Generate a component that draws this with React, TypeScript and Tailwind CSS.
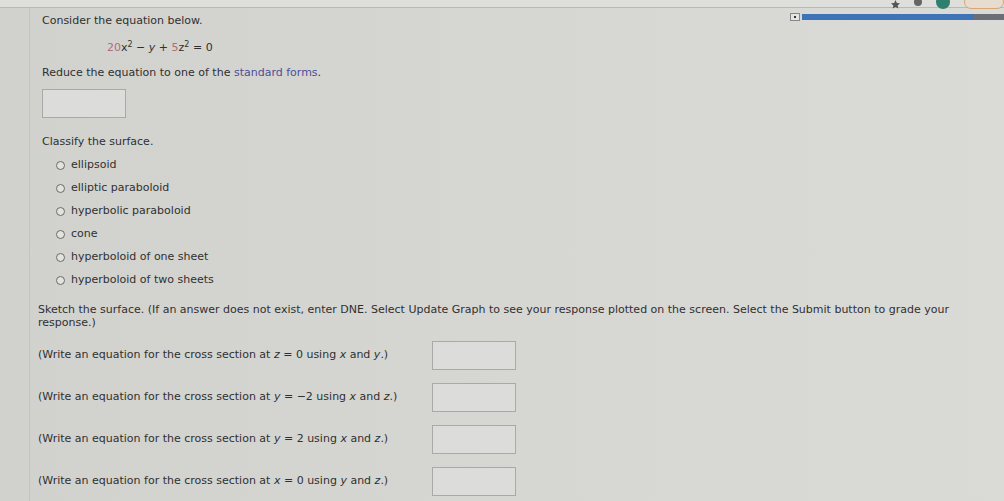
import React from "react"

const options = [
  "ellipsoid",
  "elliptic paraboloid",
  "hyperbolic paraboloid",
  "cone",
  "hyperboloid of one sheet",
  "hyperboloid of two sheets",
]

function AnswerBox() {
  return <div className="w-[84px] h-[29px] border border-[#a9aaa7] bg-[#dcdddb] shrink-0" />
}

function CrossSection({ v, val, a, b }: { v: string; val: string; a: string; b: string }) {
  return (
    <div className="flex items-center h-[29px]">
      <div className="w-[394px]">
        (Write an equation for the cross section at <i>{v}</i> = {val} using <i>{a}</i> and <i>{b}</i>.)
      </div>
      <AnswerBox />
    </div>
  )
}

export default function App() {
  return (
    <div className="w-[1004px] h-[501px] overflow-hidden bg-gradient-to-r from-[#d1d2ce] via-[#d6d7d3] to-[#dadad6] text-[#303030] text-[11px] font-['DejaVu_Sans',sans-serif] relative">
      <div className="h-[8px] bg-[#dedfdb] border-b border-[#b9bab6] relative">
        <div className="absolute right-0 top-[-6px] flex items-center gap-[14px]">
          <svg width="9" height="9" viewBox="0 0 10 10" className="mt-[6px]">
            <path d="M5 0l1.5 3.2 3.5.4-2.6 2.4.7 3.5L5 7.8 1.9 9.5l.7-3.5L0 3.6l3.5-.4z" fill="#555" />
          </svg>
          <span className="w-[8px] h-[8px] bg-[#666] rounded-sm" />
          <span className="w-[14px] h-[14px] rounded-full bg-[#2f7f6e]" />
          <span className="w-[40px] h-[14px] rounded-full border border-[#d9a676] bg-[#e6dccf]" />
        </div>
      </div>
      <div className="flex h-full">
        <div className="w-[30px] shrink-0 border-r border-[#c4c5c1]" />
        <div className="flex-1 pl-[12px]">
          <div className="flex items-start justify-between mt-[4px]">
            <div className="mt-[1px]">Consider the equation below.</div>
            <div className="flex items-center mt-[1px]">
              <div className="w-[10px] h-[8px] border border-[#888] bg-[#e4e4e2] flex items-center justify-center">
                <span className="w-[2px] h-[2px] bg-[#333]" />
              </div>
              <div className="w-[172px] h-[6px] bg-[#3f73b8] ml-[2px]" />
              <div className="w-[30px] h-[6px] bg-[#6b6e74]" />
            </div>
          </div>
          <div className="ml-[65px] mt-[11px] text-[11px] leading-[14px]">
            <span className="text-[#b56a78]">20</span>x<sup className="text-[8px]">2</sup> − <i>y</i> + <span className="text-[#b56a78]">5</span>z<sup className="text-[8px]">2</sup> = 0
          </div>
          <div className="mt-[10px]">
            Reduce the equation to one of the <span className="text-[#4b4e96]">standard forms</span>.
          </div>
          <div className="mt-[8px]">
            <AnswerBox />
          </div>
          <div className="mt-[16px]">Classify the surface.</div>
          <div className="ml-[14px] mt-[8px] flex flex-col gap-[10px]">
            {options.map((o) => (
              <label key={o} className="flex items-center h-[13px]">
                <span className="w-[9px] h-[9px] rounded-full border border-[#6a6a6a] bg-[#e2e2e0] mr-[6px]" />
                {o}
              </label>
            ))}
          </div>
          <div className="-ml-[4px] mt-[16px] pr-[40px] leading-[13px]">
            Sketch the surface. (If an answer does not exist, enter DNE. Select Update Graph to see your response plotted on the screen. Select the Submit button to grade your response.)
          </div>
          <div className="-ml-[4px] mt-[12px] flex flex-col gap-[13px]">
            <CrossSection v="z" val="0" a="x" b="y" />
            <CrossSection v="y" val="−2" a="x" b="z" />
            <CrossSection v="y" val="2" a="x" b="z" />
            <CrossSection v="x" val="0" a="y" b="z" />
          </div>
        </div>
      </div>
    </div>
  )
}
